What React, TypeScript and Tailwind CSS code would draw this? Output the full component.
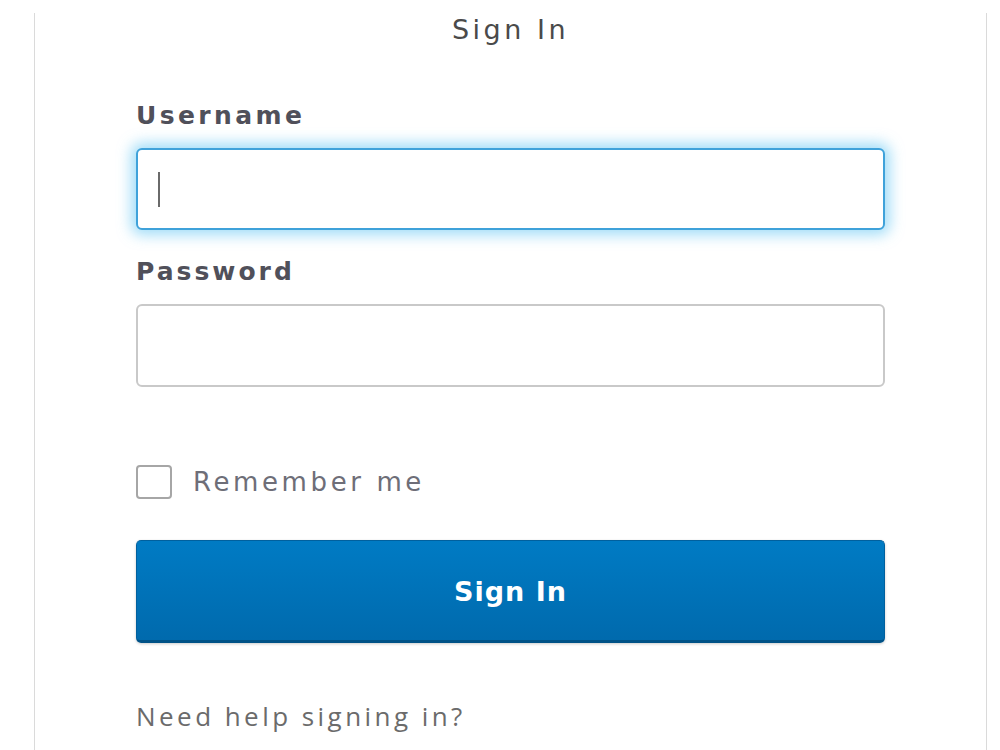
export default function App() {
  const wide = { fontFamily: '"DejaVu Sans", "Noto Sans", sans-serif' };
  const plain = { fontFamily: '"Open Sans", "Noto Sans", sans-serif' };

  return (
    <div className="h-[750px] overflow-hidden bg-white">
      <div className="ml-[34px] h-[750px] w-[953px] border-x border-[#dadada] bg-white px-[101px]">
        {/* title */}
        <h1
          className="mt-[13px] text-center text-[27px] leading-[34px] tracking-[3.5px] text-[#4a4a4a]"
          style={wide}
        >
          Sign In
        </h1>

        {/* username */}
        <label
          className="mt-[53px] block text-[25px] font-semibold leading-[32px] tracking-[3.4px] text-[#50505a]"
          style={wide}
        >
          Username
        </label>
        <div className="mt-[16px] flex h-[82px] items-center rounded-[6px] border-2 border-[#3fa2da] bg-white px-[20px] shadow-[0_0_14px_5px_rgba(100,198,244,0.6)]">
          <div className="h-[35px] w-[2px] bg-[#6a6a6a]" />
        </div>

        {/* password */}
        <label
          className="mt-[26px] block text-[25px] font-semibold leading-[32px] tracking-[3px] text-[#50505a]"
          style={wide}
        >
          Password
        </label>
        <div className="mt-[16px] h-[83px] rounded-[6px] border-2 border-[#c9c9c9] bg-white" />

        {/* remember */}
        <div className="mt-[78px] flex items-center gap-[21px]">
          <div className="h-[34px] w-[36px] rounded-[4px] border-2 border-[#a6a6a6] bg-white" />
          <span
            className="text-[26px] leading-[32px] tracking-[3.6px] text-[#6e6e78]"
            style={wide}
          >
            Remember me
          </span>
        </div>

        {/* button */}
        <button
          className="mt-[41px] flex h-[103px] w-full items-center justify-center rounded-[5px] border border-[#00609e] border-b-[3px] border-b-[#005287] bg-gradient-to-b from-[#007bc4] to-[#006aad] pt-[3px] text-[27px] font-semibold tracking-[1px] text-white shadow-[0_1px_3px_rgba(0,0,0,0.2)]"
          style={wide}
        >
          Sign In
        </button>

        {/* help */}
        <div
          className="mt-[57px] text-[26px] leading-[32px] tracking-[3.45px] text-[#6b6b6b]"
          style={plain}
        >
          Need help signing in?
        </div>
      </div>
    </div>
  );
}
